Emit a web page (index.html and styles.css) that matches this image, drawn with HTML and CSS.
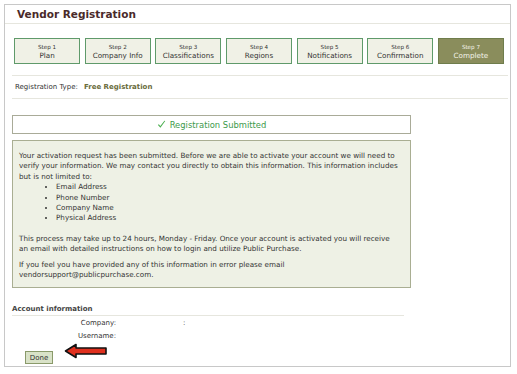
FILE: index.html
```html
<!DOCTYPE html>
<html>
<head>
<meta charset="utf-8">
<link rel="stylesheet" href="styles.css">
</head>
<body>
<div class="frame">
  <div class="header">Vendor Registration</div>
  <div class="content">
    <div class="steps">
      <div class="step"><span class="num">Step 1</span><span class="name">Plan</span></div>
      <div class="step"><span class="num">Step 2</span><span class="name">Company Info</span></div>
      <div class="step"><span class="num">Step 3</span><span class="name">Classifications</span></div>
      <div class="step"><span class="num">Step 4</span><span class="name">Regions</span></div>
      <div class="step"><span class="num">Step 5</span><span class="name">Notifications</span></div>
      <div class="step"><span class="num">Step 6</span><span class="name">Confirmation</span></div>
      <div class="step active"><span class="num">Step 7</span><span class="name">Complete</span></div>
    </div>
    <div class="regtype"><span class="label">Registration Type:</span><span class="value">Free Registration</span></div>
    <div class="submitted">
      <svg class="check" width="9" height="9" viewBox="0 0 10 10"><path d="M1 5.5 L3.8 8.5 L9.2 1.2 L8.2 0.8 L3.7 6.6 L2 4.6 Z" fill="#4caf50"/></svg>
      <span>Registration Submitted</span>
    </div>
    <div class="info">
      <p>Your activation request has been submitted. Before we are able to activate your account we will need to<br>verify your information. We may contact you directly to obtain this information. This information includes<br>but is not limited to:</p>
      <ul>
        <li>Email Address</li>
        <li>Phone Number</li>
        <li>Company Name</li>
        <li>Physical Address</li>
      </ul>
      <p class="gap">This process may take up to 24 hours, Monday - Friday. Once your account is activated you will receive<br>an email with detailed instructions on how to login and utilize Public Purchase.</p>
      <p class="gap2">If you feel you have provided any of this information in error please email<br>vendorsupport@publicpurchase.com.</p>
    </div>
    <div class="account">
      <div class="acc-title">Account information</div>
      <div class="acc-row"><span class="acc-label">Company:</span><span class="acc-colon">:</span></div>
      <div class="acc-row"><span class="acc-label">Username:</span></div>
    </div>
    <div class="actions">
      <button class="done">Done</button>
      <svg class="arrow" width="44" height="16" viewBox="0 0 44 16"><path d="M1.5 8 L12 1.5 L12 5 L42 5 L42 11 L12 11 L12 14.5 Z" fill="#e0301e" stroke="#111" stroke-width="1.6" stroke-linejoin="round"/></svg>
    </div>
  </div>
</div>
</body>
</html>
```
FILE: styles.css
```css
html, body {
  margin: 0;
  padding: 0;
  background: #ffffff;
}
body {
  font-family: "DejaVu Sans", Verdana, sans-serif;
  color: #333;
}
.frame {
  margin: 4px;
  width: 507px;
  height: 363px;
  border: 1px solid #c8c8c8;
  box-sizing: border-box;
}
.header {
  height: 18px;
  padding-left: 12px;
  border-bottom: 1px solid #e6e6de;
  font-weight: bold;
  font-size: 10.5px;
  line-height: 18px;
  color: #4a2a2a;
}
.content {
  padding: 0 3px 0 7px;
}
.steps {
  display: flex;
  gap: 4.5px;
  margin: 14px 0 0 2px;
  width: 490px;
}
.step {
  flex: 1;
  height: 26px;
  box-sizing: border-box;
  border: 1px solid #5f9a6a;
  background: #f0f1e6;
  display: flex;
  flex-direction: column;
  align-items: center;
  justify-content: center;
  color: #333;
}
.step .num {
  font-size: 5.6px;
  line-height: 8px;
}
.step .name {
  font-size: 7.2px;
  line-height: 9px;
}
.step.active {
  background: #8a8d5c;
  border-color: #6f7d4c;
  color: #f4f4ea;
}
.regtype {
  margin-top: 11px;
  border-top: 1px solid #e6e6de;
  border-bottom: 1px solid #e6e6de;
  height: 22px;
  display: flex;
  align-items: center;
  padding-left: 3px;
  font-size: 7px;
  width: 493px;
}
.regtype .label {
  margin-right: 6px;
}
.regtype .value {
  font-weight: bold;
  color: #6a6c3c;
}
.submitted {
  margin-top: 16px;
  width: 399px;
  height: 19px;
  box-sizing: border-box;
  border: 1px solid #a9ab98;
  display: flex;
  align-items: center;
  justify-content: center;
  gap: 4px;
  font-size: 8.4px;
  color: #3c9a4a;
}
.check {
  margin-top: -1px;
}
.info {
  margin-top: 6px;
  width: 399px;
  height: 148px;
  box-sizing: border-box;
  border: 1px solid #a9ae92;
  background: #eef1e5;
  padding: 10px 6px 0 6px;
  font-size: 7.2px;
  line-height: 10.4px;
  color: #333;
}
.info p {
  margin: 0;
}
.info ul {
  margin: 0;
  padding-left: 37px;
  list-style: disc;
}
.info p.gap {
  margin-top: 10px;
}
.info p.gap2 {
  margin-top: 5px;
}
.account {
  margin-top: 17px;
  font-size: 7px;
}
.acc-title {
  font-weight: bold;
  color: #444;
  width: 392px;
  border-bottom: 1px solid #e6e6de;
  line-height: 9px;
  padding-bottom: 1px;
}
.acc-row {
  display: flex;
  height: 13px;
  align-items: center;
}
.acc-label {
  width: 104px;
  text-align: right;
}
.acc-colon {
  margin-left: 67px;
}
.actions {
  display: flex;
  align-items: center;
  margin-top: 0;
  padding-left: 13px;
  gap: 11px;
}
.done {
  font-family: "DejaVu Sans", Verdana, sans-serif;
  font-size: 7px;
  height: 13px;
  width: 28px;
  padding: 0;
  margin-top: 9px;
  border: 1px solid #8a9a6a;
  background: #d9e2c8;
  color: #333;
}
.arrow {
  margin-top: -5px;
}
```
